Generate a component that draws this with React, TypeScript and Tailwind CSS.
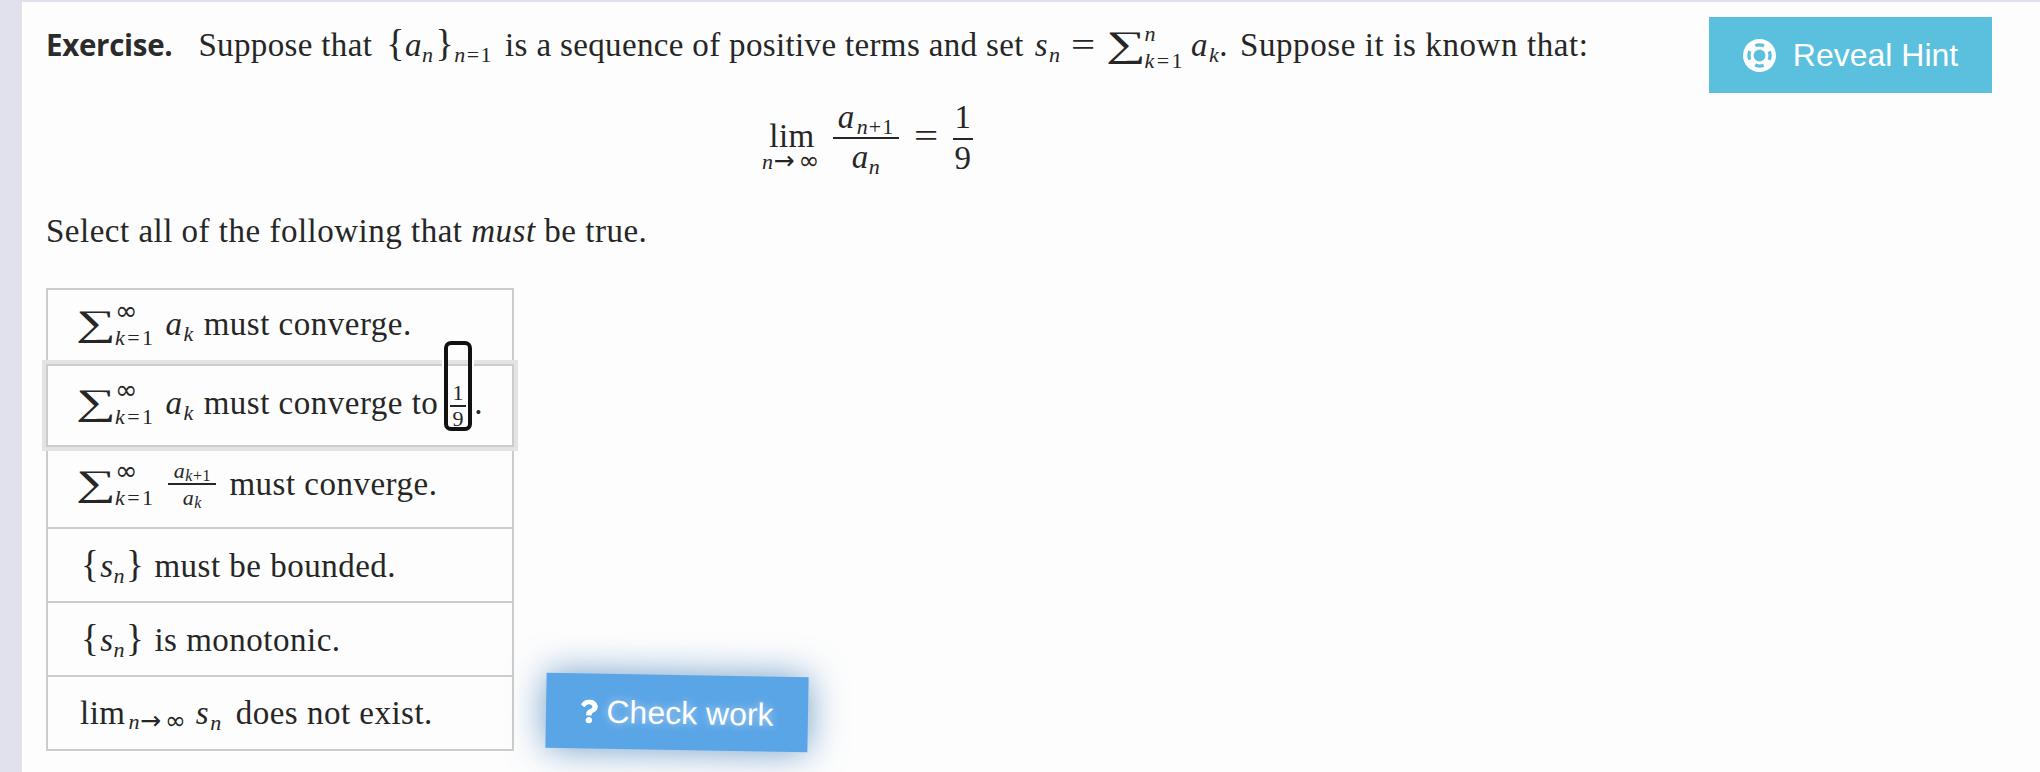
import React from "react";
import { FaQuestion } from "react-icons/fa";

const I = ({ children }: { children: React.ReactNode }) => <span className="italic">{children}</span>;

const Dj = ({ children, wide }: { children: React.ReactNode; wide?: boolean }) => (
  <span className={`[font-family:'DejaVu_Sans',sans-serif] ${wide ? "text-[25px] tracking-[4px]" : "text-[27px] tracking-normal"}`}>
    {children}
  </span>
);

const Script = ({ children, y = 6, ml = 0 }: { children: React.ReactNode; y?: number; ml?: number }) => (
  <span className="text-[22px] leading-none" style={{ transform: `translateY(${y}px)`, marginLeft: ml }}>
    {children}
  </span>
);

const Sym = ({ a, b }: { a: string; b: string }) => (
  <span className="inline-flex items-baseline">
    <I>{a}</I>
    <Script ml={1}>
      <I>{b}</I>
    </Script>
  </span>
);

const Eq = () => <span className="inline-block w-[24px] origin-left scale-x-[1.3]">=</span>;

const Sum = ({ sup }: { sup: string }) => (
  <span className="inline-flex items-baseline">
    <span className="-ml-[5px] inline-block w-[38px] origin-left scale-x-[1.55] text-[36px] leading-none">∑</span>
    <span className="ml-[1px] flex flex-col items-start text-[22px] leading-[25px] -translate-y-[15px]">
      <span className="h-[27px]">{sup === "∞" ? <Dj>∞</Dj> : <I>{sup}</I>}</span>
      <span className="h-[25px] tracking-[2.4px]">
        <I>k</I>=1
      </span>
    </span>
  </span>
);

const Row = ({ h, children, hi, pad = "" }: { h: string; children: React.ReactNode; hi?: boolean; pad?: string }) => (
  <div
    className={`flex items-center border-2 border-[#cccccc] pl-[33px] -mt-[2px] first:mt-0 ${h} ${pad} ${
      hi ? "relative z-10 shadow-[0_0_0_4px_#e3e3e3]" : ""
    }`}
  >
    <div className="flex items-baseline whitespace-nowrap">{children}</div>
  </div>
);

const Braces = () => (
  <span className="inline-flex items-baseline">
    <span className="text-[37px] leading-none">{"{"}</span>
    <span className="ml-[1px]">
      <I>s</I>
    </span>
    <Script>
      <I>n</I>
    </Script>
    <span className="text-[37px] leading-none ml-[1px]">{"}"}</span>
  </span>
);

const Ring = () => (
  <svg viewBox="0 0 100 100" className="h-[33px] w-[33px]">
    <circle cx="50" cy="50" r="50" fill="#fff" />
    <circle cx="50" cy="50" r="18" fill="#5bc0de" />
    <circle
      cx="50"
      cy="50"
      r="32"
      fill="none"
      stroke="#5bc0de"
      strokeWidth="10"
      pathLength={360}
      strokeDasharray="48 42"
      strokeDashoffset="24"
    />
  </svg>
);

export default function App() {
  return (
    <div className="h-[772px] w-[2040px] overflow-hidden border-l-[22px] border-t-2 border-[#e1e1ee] bg-[#fdfdfd] text-[#262626] [font-family:'Liberation_Serif',serif] text-[33px] leading-none tracking-[0.5px]">
      <div className="flex items-start pl-6 pr-12">
        <div className="flex-1">
          <div className="flex h-[68px] items-baseline whitespace-nowrap pt-[22px]">
            <span className="[font-family:'Open_Sans',sans-serif] text-[29.5px] font-bold tracking-[-0.3px] text-[#2b2b2b]">
              Exercise.
            </span>
            <span className="ml-[26px] tracking-[0.35px]">Suppose that</span>
            <span className="ml-[14px] inline-flex items-baseline">
              <span className="text-[38px] leading-none">{"{"}</span>
              <I>a</I>
              <Script>
                <I>n</I>
              </Script>
              <span className="ml-[2px] text-[38px] leading-none">{"}"}</span>
              <Script>
                <span className="tracking-[1.5px]">
                  <I>n</I>=1
                </span>
              </Script>
            </span>
            <span className="ml-[12px] tracking-[0.35px]">is a sequence of positive terms and set</span>
            <span className="ml-[11px] inline-flex items-baseline">
              <Sym a="s" b="n" />
              <span className="ml-[10px] mr-[16px]">
                <Eq />
              </span>
              <Sum sup="n" />
              <span className="ml-[6px]">
                <Sym a="a" b="k" />
              </span>
            </span>
            <span>.</span>
            <span className="ml-[12px] tracking-[0.6px]">Suppose it is known that:</span>
          </div>
          <div className="flex h-[106px] items-baseline justify-center pr-[5px] pt-[46px]">
            <span className="relative w-[60px] text-center">
              lim
              <span className="absolute left-0 top-[28px] whitespace-nowrap text-[22px]">
                <I>n</I>
                <Dj wide>→∞</Dj>
              </span>
            </span>
            <span className="ml-[11px] flex w-[66px] -translate-y-[19px] flex-col items-center">
              <span className="inline-flex h-[40px] items-baseline leading-[40px]">
                <I>a</I>
                <Script ml={2}>
                  <span className="tracking-[1px]">
                    <I>n</I>+1
                  </span>
                </Script>
              </span>
              <span className="h-[2px] w-full bg-[#262626]" />
              <span className="inline-flex h-[36px] items-baseline leading-[36px]">
                <I>a</I>
                <Script>
                  <I>n</I>
                </Script>
              </span>
            </span>
            <span className="mx-[15px]">
              <Eq />
            </span>
            <span className="flex w-[20px] -translate-y-[19px] flex-col items-center">
              <span className="h-[38px] leading-[38px]">1</span>
              <span className="mt-[2px] h-[2px] w-full bg-[#262626]" />
              <span className="h-[36px] leading-[36px]">9</span>
            </span>
          </div>
          <div className="mt-[39px] h-[73px] whitespace-nowrap">
            Select all of the following that <I>must</I> be true.
          </div>
          <div className="flex items-end">
            <div className="flex w-[468px] flex-col">
              <Row h="h-[78px]" pad="pt-[16px]">
                <Sum sup="∞" />
                <span className="ml-[10px]">
                  <Sym a="a" b="k" />
                </span>
                <span className="ml-[10px]">must converge.</span>
              </Row>
              <Row h="h-[83px]" hi pad="pt-[18px]">
                <Sum sup="∞" />
                <span className="ml-[10px]">
                  <Sym a="a" b="k" />
                </span>
                <span className="ml-[10px]">must converge to</span>
                <span className="relative ml-[12px] flex w-[16px] -translate-y-[14px] flex-col items-center text-[22px]">
                  <span className="h-[24px] leading-[24px]">1</span>
                  <span className="h-[2px] w-full shrink-0 bg-[#262626]" />
                  <span className="h-[24px] leading-[24px]">9</span>
                  <span className="absolute -left-[6px] -right-[6px] -top-[40px] h-[90px] rounded-[7px] border-4 border-[#111111] shadow-[0_0_0_2px_#fdfdfd]" />
                </span>
                <span className="ml-[8px]">.</span>
              </Row>
              <Row h="h-[84px]" pad="pt-[18px]">
                <Sum sup="∞" />
                <span className="ml-[13px] flex w-[48px] -translate-y-[17px] flex-col items-center text-[22px]">
                  <span className="inline-flex h-[24px] items-baseline leading-[24px]">
                    <I>a</I>
                    <span className="text-[16px] leading-none translate-y-[3px]">
                      <I>k</I>+1
                    </span>
                  </span>
                  <span className="h-[2px] w-full shrink-0 bg-[#262626]" />
                  <span className="inline-flex h-[26px] items-baseline leading-[26px]">
                    <I>a</I>
                    <span className="text-[16px] leading-none translate-y-[3px]">
                      <I>k</I>
                    </span>
                  </span>
                </span>
                <span className="ml-[13px]">must converge.</span>
              </Row>
              <Row h="h-[76px]" pad="pb-[2px]">
                <Braces />
                <span className="ml-[10px]">must be bounded.</span>
              </Row>
              <Row h="h-[76px]" pad="pb-[2px]">
                <Braces />
                <span className="ml-[10px]">is monotonic.</span>
              </Row>
              <Row h="h-[76px]">
                <span className="-ml-[1px]">lim</span>
                <span className="ml-[3px] inline-flex items-baseline whitespace-nowrap text-[22px] translate-y-[5px]">
                  <I>n</I>
                  <Dj wide>→∞</Dj>
                </span>
                <span className="ml-[6px]">
                  <Sym a="s" b="n" />
                </span>
                <span className="ml-[14px]">does not exist.</span>
              </Row>
            </div>
            <button className="mb-[1px] ml-[32px] flex h-[75px] w-[262px] rotate-1 items-center justify-center gap-[8px] bg-[#5aa5e6] [font-family:'Liberation_Sans',sans-serif] text-[32px] tracking-normal text-white shadow-[0_0_36px_rgba(66,125,185,0.75)] [text-shadow:0_0_8px_rgba(255,255,255,0.55)]">
              <FaQuestion className="h-[24px] w-[18px]" />
              Check work
            </button>
          </div>
        </div>
        <button className="ml-[15px] mt-[15px] flex h-[76px] w-[283px] items-center justify-center gap-[17px] bg-[#5bc0de] [font-family:'Liberation_Sans',sans-serif] text-[32px] tracking-normal text-white">
          <Ring />
          Reveal Hint
        </button>
      </div>
    </div>
  );
}
